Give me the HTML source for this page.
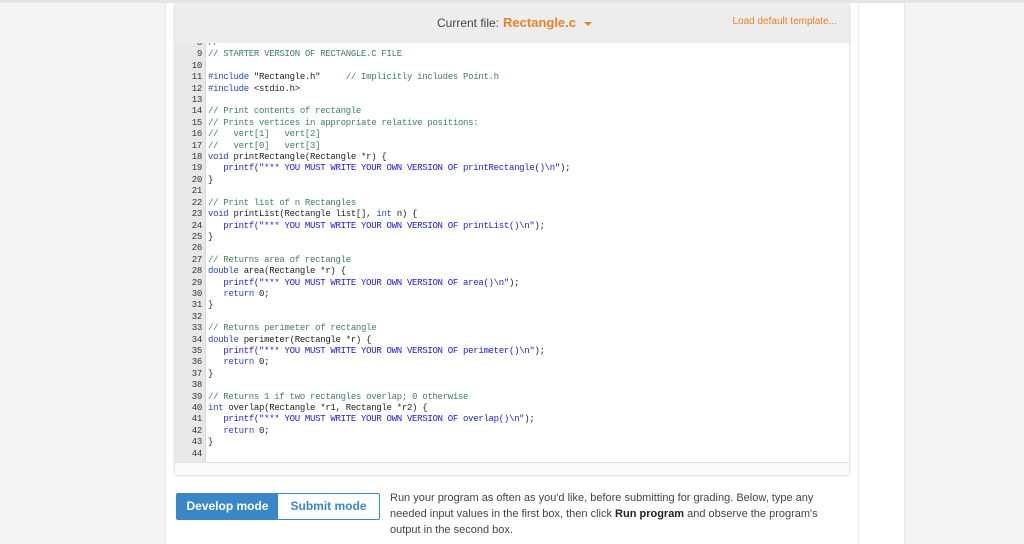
<!DOCTYPE html>
<html><head><style>
body{margin:0;width:1024px;height:544px;background:#f3f3f3;position:relative;overflow:hidden;font-family:"Liberation Sans",sans-serif}
.col{position:absolute;left:165px;top:0;width:738px;height:544px;background:#fff;border-left:1px solid #e6e6e6;border-right:1px solid #e6e6e6}
.vl{position:absolute;left:858px;top:0;width:1px;height:544px;background:#ececec}
.topline{position:absolute;left:0;top:0;width:1024px;height:3px;background:#e4e4e4;z-index:3}
.ed{position:absolute;left:175px;top:3px;width:674px;height:471px;background:#fff;box-shadow:0 1px 3px rgba(0,0,0,.25)}
.hdr{position:absolute;left:0;top:0;width:674px;height:40px;background:#ededed}
.cur{position:absolute;left:262px;top:12px;font-size:12px;color:#444}
.cur b{color:#e8822a;font-size:13px;font-weight:bold;margin-left:4px}
.cur i{display:inline-block;margin-left:8px;border-left:4px solid transparent;border-right:4px solid transparent;border-top:4px solid #e8822a;vertical-align:middle}
.load{position:absolute;right:12px;top:13px;font-size:10px;color:#e8822a}
.gut{position:absolute;left:0;top:40px;width:30px;height:419px;background:#e8e8e8;border-right:1px solid #d8d8d8}
pre{margin:0;position:absolute;top:41px;font-family:"Liberation Mono",monospace;font-size:9px;letter-spacing:-0.3px;line-height:11.4px;color:#222}
.nums{left:0;width:27px;text-align:right;color:#333}
.code{left:33px}
.c{color:#3f7f5f}.k{color:#2a44cc}.s{color:#1a1adc}
.foot{position:absolute;left:0;top:459px;width:674px;height:12px;background:#fafafa;border-top:1px solid #e3e3e3}
.btns{position:absolute;left:176px;top:493px;height:25px;width:202px;border:1px solid #3a87c8;border-radius:2px;font-size:12px;font-weight:bold}
.btns div{position:absolute;top:0;height:25px;line-height:25px;text-align:center}
.dev{left:0;width:101px;background:#3a87c8;color:#fff}
.sub{left:101px;width:101px;color:#3a87c8}
.desc{position:absolute;left:390px;top:490px;width:440px;font-size:11px;line-height:16px;color:#444}
</style></head><body>
<div class="topline"></div>
<div class="col"></div><div class="vl"></div>
<div class="ed">
<div class="gut"></div>
<pre class="nums" style="top:35px">8
9
10
11
12
13
14
15
16
17
18
19
20
21
22
23
24
25
26
27
28
29
30
31
32
33
34
35
36
37
38
39
40
41
42
43
44</pre>
<pre class="code" style="top:35px"><span class="c">//</span>
<span class="c">// STARTER VERSION OF RECTANGLE.C FILE</span>

<span class="k">#include</span> "Rectangle.h"     <span class="c">// Implicitly includes Point.h</span>
<span class="k">#include</span> &lt;stdio.h&gt;

<span class="c">// Print contents of rectangle</span>
<span class="c">// Prints vertices in appropriate relative positions:</span>
<span class="c">//   vert[1]   vert[2]</span>
<span class="c">//   vert[0]   vert[3]</span>
<span class="k">void</span> printRectangle(Rectangle *r) {
   <span class="s">printf("*** YOU MUST WRITE YOUR OWN VERSION OF printRectangle()\n"</span>);
}

<span class="c">// Print list of n Rectangles</span>
<span class="k">void</span> printList(Rectangle list[], <span class="k">int</span> n) {
   <span class="s">printf("*** YOU MUST WRITE YOUR OWN VERSION OF printList()\n"</span>);
}

<span class="c">// Returns area of rectangle</span>
<span class="k">double</span> area(Rectangle *r) {
   <span class="s">printf("*** YOU MUST WRITE YOUR OWN VERSION OF area()\n"</span>);
   <span class="k">return</span> 0;
}

<span class="c">// Returns perimeter of rectangle</span>
<span class="k">double</span> perimeter(Rectangle *r) {
   <span class="s">printf("*** YOU MUST WRITE YOUR OWN VERSION OF perimeter()\n"</span>);
   <span class="k">return</span> 0;
}

<span class="c">// Returns 1 if two rectangles overlap; 0 otherwise</span>
<span class="k">int</span> overlap(Rectangle *r1, Rectangle *r2) {
   <span class="s">printf("*** YOU MUST WRITE YOUR OWN VERSION OF overlap()\n"</span>);
   <span class="k">return</span> 0;
}
</pre>
<div class="hdr" style="z-index:2"><div class="cur">Current file:<b>Rectangle.c</b><i></i></div><div class="load">Load default template...</div></div>
<div class="foot"></div>
</div>
<div class="btns"><div class="dev">Develop mode</div><div class="sub">Submit mode</div></div>
<div class="desc">Run your program as often as you'd like, before submitting for grading. Below, type any needed input values in the first box, then click <b style="color:#222">Run program</b> and observe the program's output in the second box.</div>
</body></html>
